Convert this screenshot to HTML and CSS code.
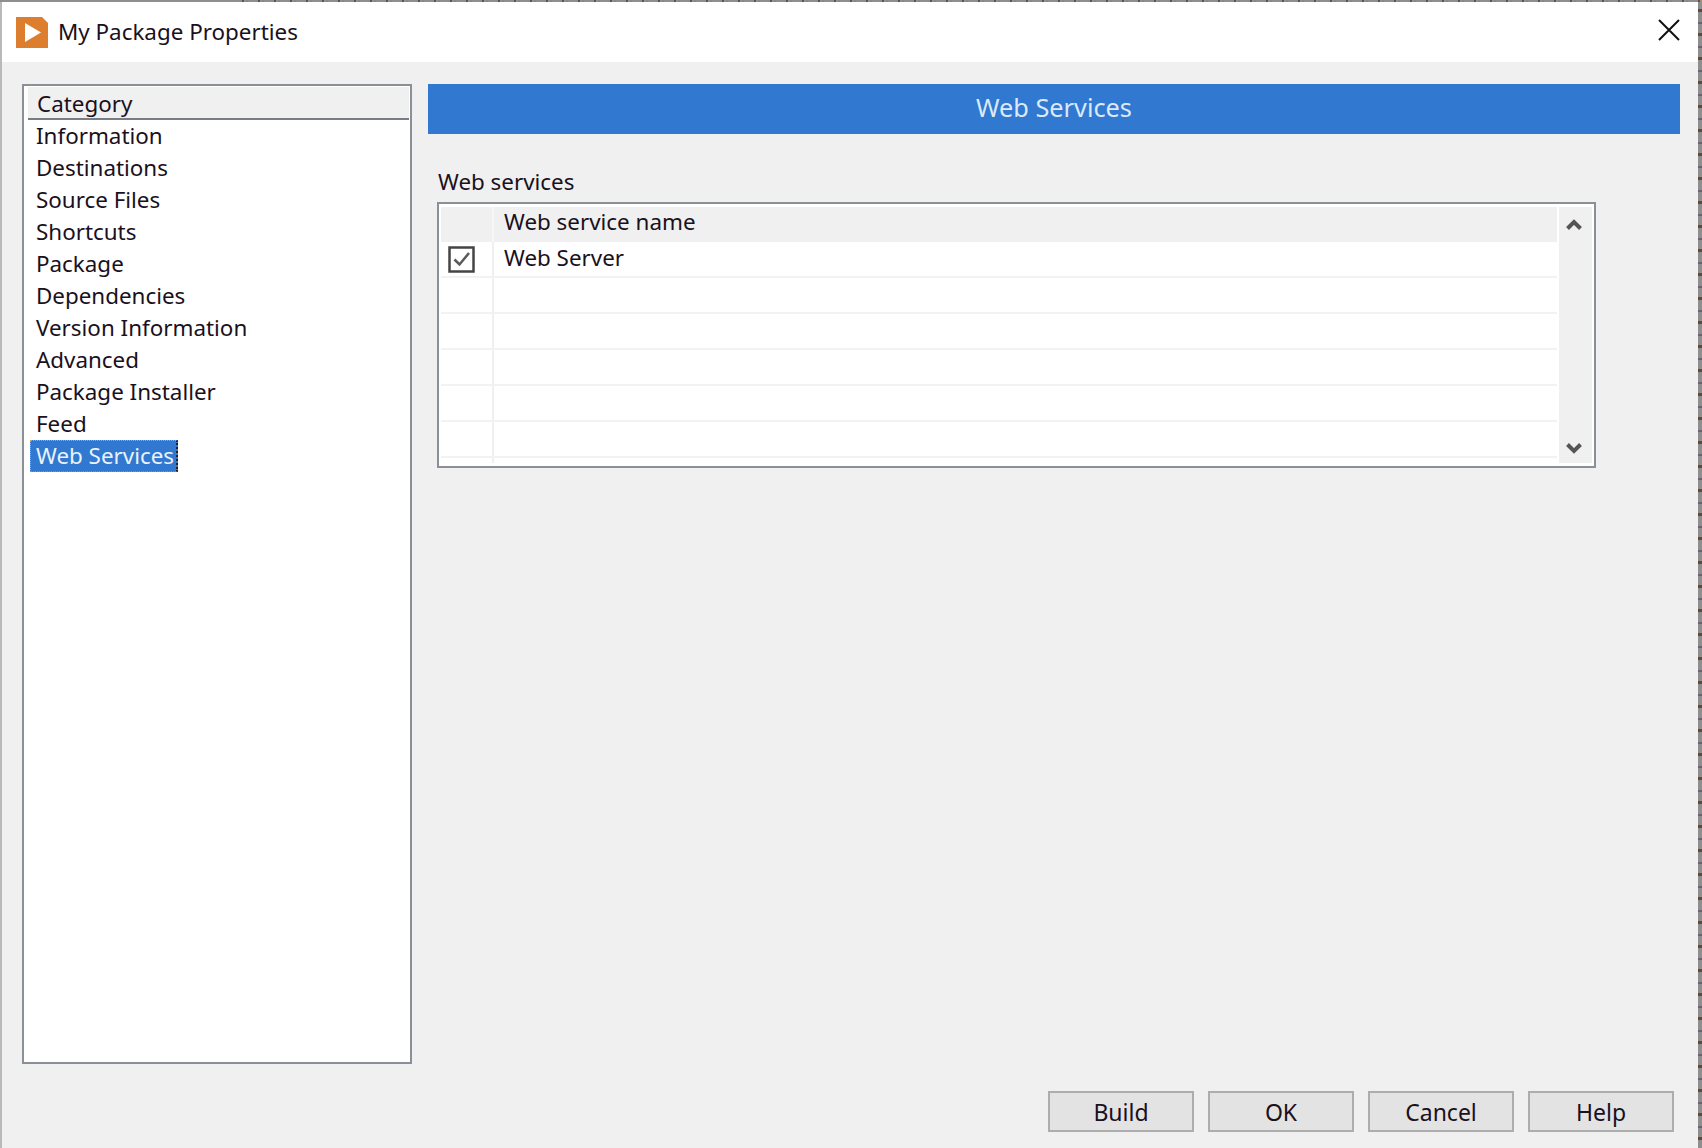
FILE: index.html
```html
<!DOCTYPE html>
<html lang="en">
<head>
<meta charset="utf-8">
<title>My Package Properties</title>
<link rel="stylesheet" href="styles.css">
</head>
<body>
<div class="window">
  <header class="titlebar">
    <svg class="app-icon" width="33" height="33" viewBox="0 0 33 33"><path d="M0 1h26l6 6v25H0z" fill="#dd7d2e"/><path d="M9 7l16 9.500-16 9.500z" fill="#fff"/></svg>
    <span class="title">My Package Properties</span>
    <svg class="close" width="22" height="22" viewBox="0 0 22 22"><path d="M1 1l20 20M21 1L1 21" stroke="#111" stroke-width="2" fill="none"/></svg>
  </header>
  <div class="body">
    <div class="main">
      <aside class="category">
        <div class="cat-head">Category</div>
        <ul class="cat-list">
          <li>Information</li>
          <li>Destinations</li>
          <li>Source Files</li>
          <li>Shortcuts</li>
          <li>Package</li>
          <li>Dependencies</li>
          <li>Version Information</li>
          <li>Advanced</li>
          <li>Package Installer</li>
          <li>Feed</li>
          <li><span class="selected">Web Services</span></li>
        </ul>
      </aside>
      <section class="panel">
        <div class="banner">Web Services</div>
        <div class="label">Web services</div>
        <div class="table">
          <div class="grid">
            <div class="row head"><div class="c1"></div><div class="c2">Web service name</div></div>
            <div class="row"><div class="c1"><svg width="28" height="27" viewBox="0 0 28 27"><rect x="1.500" y="1.500" width="24" height="24" fill="#fff" stroke="#444" stroke-width="2.500"/><path d="M6.500 13.500l5 5 9.500-11.500" fill="none" stroke="#5a5a5a" stroke-width="2.500"/></svg></div><div class="c2">Web Server</div></div>
            <div class="row"><div class="c1"></div><div class="c2"></div></div>
            <div class="row"><div class="c1"></div><div class="c2"></div></div>
            <div class="row"><div class="c1"></div><div class="c2"></div></div>
            <div class="row"><div class="c1"></div><div class="c2"></div></div>
            <div class="row"><div class="c1"></div><div class="c2"></div></div>
            <div class="row tail"><div class="c1"></div><div class="c2"></div></div>
          </div>
          <div class="scroll">
            <svg width="16" height="14" viewBox="0 0 16 14"><path d="M1.500 11.500L8 5l6.500 6.500" fill="none" stroke="#555" stroke-width="4"/></svg>
            <svg width="16" height="14" viewBox="0 0 16 14"><path d="M1.500 2.500L8 9l6.500-6.500" fill="none" stroke="#555" stroke-width="4"/></svg>
          </div>
        </div>
      </section>
    </div>
    <footer class="actions">
      <button class="btn">Build</button>
      <button class="btn">OK</button>
      <button class="btn">Cancel</button>
      <button class="btn">Help</button>
    </footer>
  </div>
</div>
</body>
</html>
```

FILE: styles.css
```css
* { box-sizing: border-box; }
html, body { margin: 0; height: 100%; }
body {
  width: 1702px;
  height: 1148px;
  overflow: hidden;
  background:
    repeating-linear-gradient(90deg, #8e8e8e 0 7px, #5a5262 7px 9px, #a39462 9px 11px, #7a8c96 11px 13px, #8e8e8e 13px 16px) 235px 0 / 100% 2px no-repeat,
    repeating-linear-gradient(180deg, #8e8e8e 0 9px, #5c4a3e 9px 12px, #8e8e8e 12px 22px, #6a6470 22px 24px) right top / 4px 100% no-repeat,
    #8e8e8e;
  font-family: "Noto Sans", "Liberation Sans", sans-serif;
  font-size: 22.400px;
  color: #1a1020;
}
.window {
  width: 1698px;
  height: 1146px;
  margin-top: 2px;
  border-left: 2px solid #b9b9b9;
  display: flex;
  flex-direction: column;
}
.titlebar {
  height: 60px;
  background: #fff;
  display: flex;
  align-items: center;
  padding: 0 15px 0 14px;
  flex: none;
}
.app-icon { flex: none; margin-right: 9px; }
.title { flex: 1; position: relative; top: -1px; }
.close { flex: none; margin-right: 3px; position: relative; top: -2px; }
.body {
  flex: 1;
  background: #f0f0f0;
  padding: 22px 18px 16px 20px;
  display: flex;
  flex-direction: column;
}
.main { flex: 1; display: flex; gap: 16px; min-height: 0; }
.category {
  width: 390px;
  height: 980px;
  background: #fff;
  border: 2px solid #8a8f98;
  padding: 1px;
  flex: none;
}
.cat-head {
  height: 33px;
  background: #f0f0f0;
  border-bottom: 2px solid #787c85;
  padding-left: 9px;
  margin-left: 3px;
  line-height: 34px;
}
.cat-list { list-style: none; margin: 0; padding: 0 0 0 4px; }
.cat-list li { height: 32px; line-height: 32px; padding-left: 7px; white-space: nowrap; }
.selected {
  display: inline-block;
  height: 32px;
  line-height: 30px;
  margin-left: -6px;
  padding: 0 2px 0 5px;
  background: #3078d0;
  color: #eaf2fb;
  border-style: dotted;
  border-width: 1px 2px 1px 1px;
  border-color: #e39a4a #222 #6a9ad8 #e39a4a;
}
.panel { flex: 1; display: flex; flex-direction: column; min-width: 0; }
.banner {
  height: 50px;
  flex: none;
  background: #3078d0;
  color: #dce9f8;
  font-size: 25.300px;
  text-align: center;
  line-height: 46px;
}
.label { margin: 30px 0 0 10px; height: 38px; line-height: 35px; }
.table {
  width: 1159px;
  margin-left: 9px;
  height: 266px;
  border: 2px solid #8a8f98;
  background: #fff;
  padding: 3px 2px 3px;
  display: flex;
}
.grid { width: 1116px; flex: none; overflow: hidden; }
.row { display: flex; height: 36px; border-bottom: 2px solid #f2f2f2; }
.row.head { height: 35px; background: #f0f0f0; border-bottom: 0; }
.row.tail { border-bottom: 0; height: 6px; }
.c1 {
  width: 53px;
  flex: none;
  border-right: 2px solid #f0f0f0;
  padding: 4px 0 0 7px;
}
.c1 svg { display: block; }
.c2 { flex: 1; padding-left: 10px; line-height: 31px; }
.head .c2 { line-height: 29px; }
.head .c1 { border-right-color: #f7f7f7; }
.scroll {
  flex: 1;
  margin-left: 2px;
  padding: 10px 3px 7px 0;
  background: #f0f0f0;
  display: flex;
  flex-direction: column;
  justify-content: space-between;
  align-items: center;
}
.actions {
  flex: none;
  display: flex;
  justify-content: flex-end;
  gap: 14px;
  padding-right: 6px;
}
.btn {
  width: 146px;
  height: 41px;
  background: #e3e3e3;
  border: 2px solid #adadad;
  font: inherit;
  font-size: 23px;
  color: inherit;
  padding: 0;
}
```
